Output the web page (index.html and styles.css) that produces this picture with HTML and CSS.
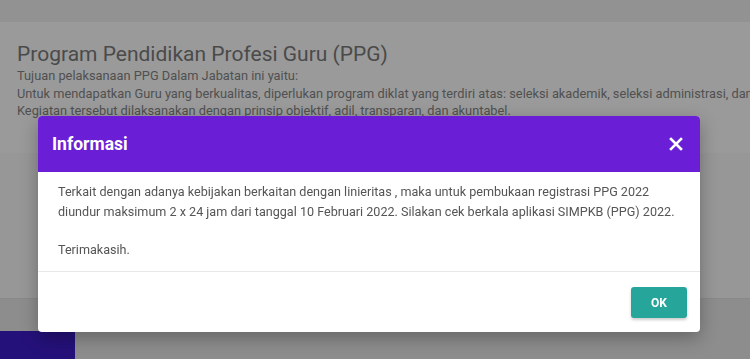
FILE: index.html
```html
<!DOCTYPE html>
<html lang="id">
<head>
<meta charset="utf-8">
<title>PPG</title>
<link rel="stylesheet" href="styles.css">
</head>
<body>
<div class="page">
  <div class="topbar"></div>
  <section class="intro">
    <h1 class="intro-title">Program Pendidikan Profesi Guru (PPG)</h1>
    <p class="intro-text">Tujuan pelaksanaan PPG Dalam Jabatan ini yaitu:<br>Untuk mendapatkan Guru yang berkualitas, diperlukan program diklat yang terdiri atas: seleksi akademik, seleksi administrasi, dan pendidikan profesi.<br>Kegiatan tersebut dilaksanakan dengan prinsip objektif, adil, transparan, dan akuntabel.</p>
  </section>
  <section class="panel"></section>
  <div class="lower">
    <div class="brand-block"></div>
  </div>
</div>

<div class="overlay">
  <div class="modal">
    <div class="modal-header">
      <h2 class="modal-title">Informasi</h2>
      <span class="modal-close">
        <svg width="14" height="14" viewBox="0 0 14 14"><path d="M2 2L12 12M12 2L2 12" stroke="#fff" stroke-width="2.6" stroke-linecap="square"/></svg>
      </span>
    </div>
    <div class="modal-body">
      <p class="modal-text">Terkait dengan adanya kebijakan berkaitan dengan linieritas , maka untuk pembukaan registrasi PPG 2022<br>diundur maksimum 2 x 24 jam dari tanggal 10 Februari 2022. Silakan cek berkala aplikasi SIMPKB (PPG) 2022.</p>
      <p class="modal-text">Terimakasih.</p>
    </div>
    <div class="modal-footer">
      <button class="btn-ok">OK</button>
    </div>
  </div>
</div>
</body>
</html>
```

FILE: styles.css
```css
html, body {
  margin: 0;
  padding: 0;
}
body {
  width: 750px;
  height: 359px;
  overflow: hidden;
  background: #8c8c8c;
  font-family: Roboto, "Liberation Sans", sans-serif;
}
.page {
  display: flex;
  flex-direction: column;
  height: 359px;
}
.topbar {
  height: 22px;
  background: #929292;
}
.intro {
  height: 131px;
  box-sizing: border-box;
  padding: 19px 0 0 17px;
  background: #9a9a9a;
  white-space: nowrap;
  overflow: hidden;
}
.intro-title {
  margin: 0;
  font-size: 21px;
  font-weight: 400;
  line-height: 26px;
  color: #4a4a4a;
}
.intro-text {
  margin: 0;
  font-size: 12.8px;
  line-height: 17.5px;
  color: #505050;
}
.panel {
  height: 145px;
  background: #979797;
  border-bottom: 1px solid #898989;
}
.lower {
  flex: 1;
  display: flex;
  align-items: flex-end;
  background: #8d8d8d;
}
.brand-block {
  width: 75px;
  height: 28px;
  background: #25117a;
}
.overlay {
  position: fixed;
  inset: 0;
  padding: 116px 0 0 38px;
}
.modal {
  width: 662px;
  background: #fff;
  border-radius: 4px;
  overflow: hidden;
  box-shadow: 0 6px 18px rgba(0, 0, 0, 0.28);
}
.modal-header {
  height: 56px;
  box-sizing: border-box;
  padding: 0 17px 0 14px;
  background: #6a1fd6;
  display: flex;
  align-items: center;
  justify-content: space-between;
}
.modal-title {
  margin: 0;
  font-size: 17.5px;
  font-weight: 700;
  color: #fff;
}
.modal-close {
  display: flex;
}
.modal-body {
  padding: 10px 20px 11px 20px;
  border-bottom: 1px solid #e8e8e8;
}
.modal-text {
  margin: 0 0 18px;
  font-size: 12.6px;
  line-height: 20px;
  color: #555;
  white-space: nowrap;
}
.modal-text:last-child {
  margin-bottom: 0;
}
.modal-footer {
  height: 60px;
  box-sizing: border-box;
  padding: 15px 13px 0 0;
  display: flex;
  justify-content: flex-end;
  align-items: flex-start;
}
.btn-ok {
  width: 56px;
  height: 31px;
  border: none;
  border-radius: 3px;
  background: #26a69a;
  color: #fff;
  font-family: Roboto, "Liberation Sans", sans-serif;
  font-size: 12px;
  font-weight: 700;
  box-shadow: 0 2px 3px rgba(0, 0, 0, 0.2);
}
```
